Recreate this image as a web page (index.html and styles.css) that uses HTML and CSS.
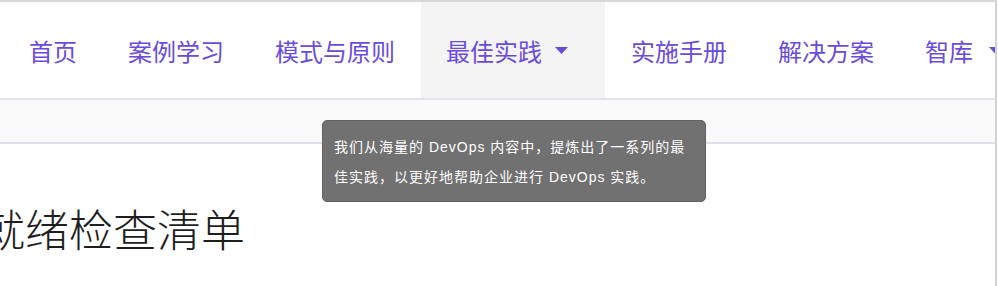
FILE: index.html
```html
<!DOCTYPE html>
<html lang="zh-CN">
<head>
<meta charset="utf-8">
<title>就绪检查清单</title>
<link rel="stylesheet" href="styles.css">
</head>
<body>
<div class="page">
  <nav class="nav">
    <a class="nav-item">首页</a>
    <a class="nav-item">案例学习</a>
    <a class="nav-item">模式与原则</a>
    <a class="nav-item active">最佳实践<svg class="caret" width="13" height="7" viewBox="0 0 13 7"><polygon points="0,0 13,0 6.5,7"/></svg></a>
    <a class="nav-item">实施手册</a>
    <a class="nav-item">解决方案</a>
    <a class="nav-item last">智库<svg class="caret" width="13" height="7" viewBox="0 0 13 7"><polygon points="0,0 13,0 6.5,7"/></svg></a>
  </nav>
  <div class="subbar"></div>
  <main class="content">
    <h1 class="title">就绪检查清单</h1>
  </main>
  <div class="tooltip">我们从海量的 DevOps 内容中，提炼出了一系列的最佳实践，以更好地帮助企业进行 DevOps 实践。</div>
</div>
</body>
</html>
```
FILE: styles.css
```css
html, body {
  margin: 0;
  padding: 0;
  background: #ffffff;
}

body {
  font-family: "Liberation Sans", "Noto Sans CJK SC", sans-serif;
  overflow: hidden;
}

.page {
  position: relative;
  width: 995px;
  height: 284px;
  border-top: 2px solid #d8d8d8;
  border-right: 2px solid #d2d2d2;
  overflow: hidden;
}

.nav {
  display: flex;
  flex-wrap: nowrap;
  height: 96px;
  padding-left: 4px;
  border-bottom: 2px solid #e4e3ec;
  overflow: hidden;
  white-space: nowrap;
}

.nav-item {
  display: flex;
  align-items: center;
  flex: none;
  padding: 0 25px;
  margin-right: 1px;
  font-family: "Noto Sans CJK SC", sans-serif;
  font-size: 24px;
  color: #6a4cdb;
  cursor: pointer;
}

.nav-item.active {
  background: #f4f4f4;
}

.caret {
  margin-left: 13px;
  margin-right: 12px;
  fill: #6a4cdb;
}

.nav-item.last .caret {
  margin-left: 16px;
}

.subbar {
  height: 42px;
  background: #f9f9f9;
  border-bottom: 2px solid #e0dfea;
}

.content {
  padding: 0;
}

.title {
  margin: 56px 0 0 -19px;
  font-family: "Noto Sans CJK SC", sans-serif;
  font-weight: 200;
  font-size: 44px;
  line-height: 56px;
  color: #1e1e1e;
  white-space: nowrap;
}

.tooltip {
  position: absolute;
  left: 322px;
  top: 118px;
  width: 360px;
  padding: 11px 11px 9px 11px;
  background: #717171;
  border: 1px solid #626262;
  border-radius: 5px;
  color: #ffffff;
  font-family: "Liberation Sans", "Noto Sans CJK SC", sans-serif;
  font-size: 14px;
  line-height: 30px;
  letter-spacing: 1px;
}
```
